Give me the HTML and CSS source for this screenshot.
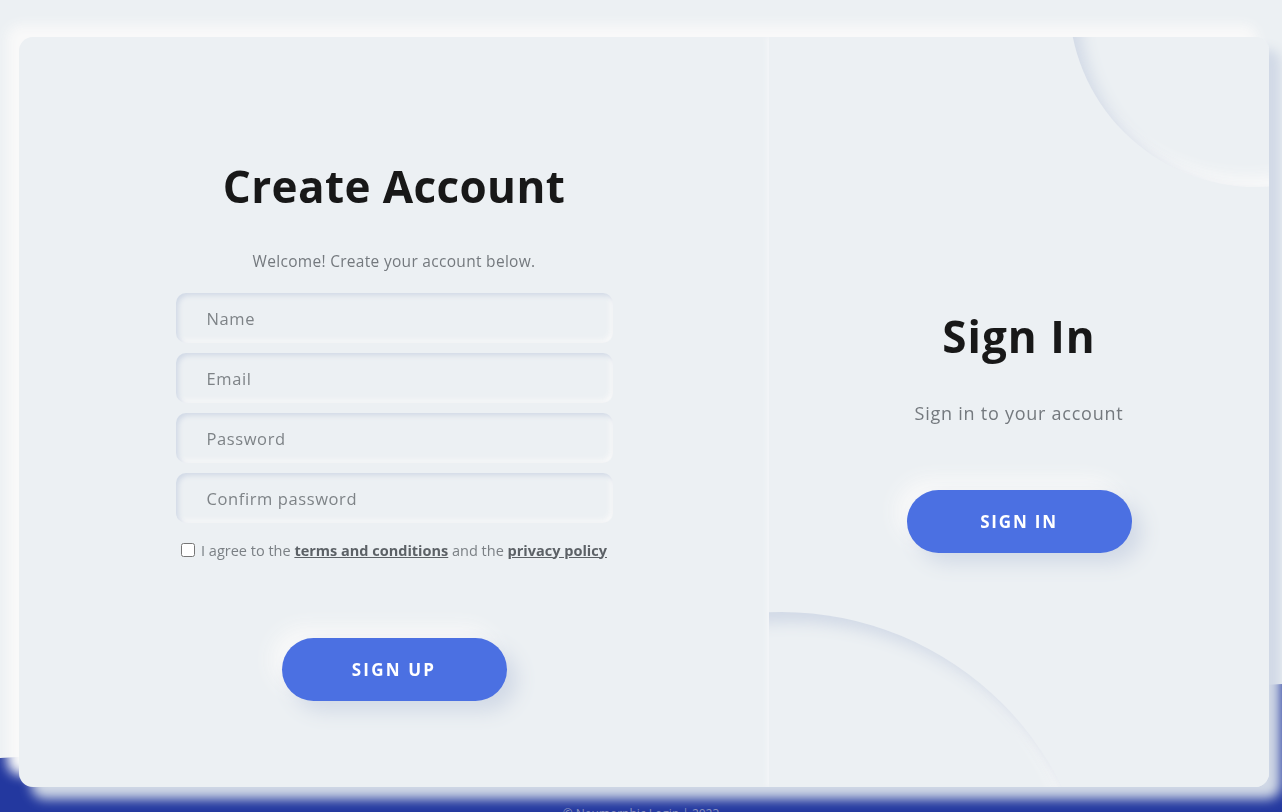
FILE: index.html
```html
<!DOCTYPE html>
<html lang="en">
<head>
<meta charset="utf-8">
<title>Neumorphic Sign Up</title>
<link rel="stylesheet" href="styles.css">
</head>
<body>
<div class="backdrop"><p class="credit">© Neumorphic Login | 2023</p></div>
<main class="card">
  <section class="form-panel">
    <h1 class="title">Create Account</h1>
    <p class="desc">Welcome! Create your account below.</p>
    <form class="form">
      <input class="field" type="text" placeholder="Name">
      <input class="field" type="email" placeholder="Email">
      <input class="field" type="password" placeholder="Password">
      <input class="field" type="password" placeholder="Confirm password">
      <label class="agree"><input type="checkbox" class="check"><span>I agree to the <a href="#" class="link">terms and conditions</a> and the <a href="#" class="link">privacy policy</a></span></label>
      <button type="button" class="btn btn-up">SIGN UP</button>
    </form>
  </section>
  <section class="switch">
    <div class="circle circle-bottom"></div>
    <div class="circle circle-top"></div>
    <h2 class="title">Sign In</h2>
    <p class="desc desc-lg">Sign in to your account</p>
    <button type="button" class="btn btn-in">SIGN IN</button>
  </section>
</main>
</body>
</html>
```
FILE: styles.css
```css
html, body {
  margin: 0;
  padding: 0;
  height: 100%;
  overflow: hidden;
}
body {
  background: #ecf0f3;
  font-family: "Open Sans", "Noto Sans", sans-serif;
  color: #181818;
}
.backdrop {
  position: fixed;
  left: 0;
  right: 0;
  bottom: 0;
  height: 128px;
  background: #23389f;
  clip-path: polygon(0 74px, 100% 0, 100% 100%, 0 100%);
  z-index: 0;
}
.credit {
  margin: 0;
  padding-top: 122px;
  text-align: center;
  font-size: 12px;
  line-height: 16px;
  color: #8890bd;
}
.card {
  position: relative;
  z-index: 1;
  display: flex;
  width: 1250px;
  height: 750px;
  margin: 37px 0 0 19px;
  background: #ecf0f3;
  border-radius: 14px;
  overflow: hidden;
  box-shadow: 12px 12px 12px #d1d9e6, -12px -12px 12px #f9f9f9;
}
.form-panel {
  flex: 1;
  display: flex;
  flex-direction: column;
  align-items: center;
  padding-top: 123px;
}
.title {
  margin: 0;
  font-size: 44px;
  line-height: 52px;
  font-weight: 700;
  color: #181818;
  letter-spacing: 0.4px;
}
.desc {
  margin: 38px 0 0;
  font-size: 15.5px;
  line-height: 22px;
  color: #74797e;
  letter-spacing: 0.3px;
}
.form {
  display: flex;
  flex-direction: column;
  align-items: center;
  margin-top: 21px;
  gap: 10px;
}
.field {
  box-sizing: border-box;
  width: 437px;
  height: 50px;
  padding: 0 0 0 31px;
  border: none;
  outline: none;
  border-radius: 10px;
  background: #ecf0f3;
  font-family: "Open Sans", "Noto Sans", sans-serif;
  font-size: 16.5px;
  color: #333;
  letter-spacing: 0.6px;
  box-shadow: inset 2.5px 2.5px 5px #d1d9e6, inset -2.5px -2.5px 5px #f9f9f9;
}
.field::placeholder {
  color: #7e8387;
}
.agree {
  display: flex;
  align-items: center;
  gap: 6px;
  margin-top: 7px;
  height: 20px;
  font-size: 14.5px;
  color: #7b8085;
}
.check {
  margin: 0;
  width: 14px;
  height: 14px;
}
.link {
  color: #5c6166;
  font-weight: 700;
  text-decoration: underline;
}
.btn {
  width: 225px;
  height: 63px;
  border: none;
  border-radius: 32px;
  background: #4b70e2;
  color: #fff;
  font-family: "Open Sans", "Noto Sans", sans-serif;
  font-size: 17px;
  font-weight: 700;
  letter-spacing: 2.2px;
  box-shadow: 10px 10px 20px #d1d9e6, -10px -10px 20px #f9f9f9;
  cursor: pointer;
}
.btn-up {
  margin-top: 68px;
}
.switch {
  position: relative;
  width: 500px;
  display: flex;
  flex-direction: column;
  align-items: center;
  padding-top: 273px;
  box-sizing: border-box;
  overflow: hidden;
  background: #ecf0f3;
  box-shadow: -2px 0 5px #f4f6f8;
}
.switch .title,
.switch .desc,
.switch .btn {
  position: relative;
  z-index: 1;
}
.switch .title {
  letter-spacing: 1px;
}
.desc-lg {
  margin-top: 40px;
  font-size: 18px;
  letter-spacing: 0.75px;
}
.btn-in {
  margin-top: 66px;
  letter-spacing: 1.8px;
}
.circle {
  position: absolute;
  border-radius: 50%;
  background: #ecf0f3;
  box-shadow: inset 10px 10px 15px #d1d9e6, inset -10px -10px 15px #f9f9f9;
}
.circle-bottom {
  width: 625px;
  height: 625px;
  left: -300px;
  top: 575px;
}
.circle-top {
  width: 375px;
  height: 375px;
  left: 300px;
  top: -225px;
}
```
